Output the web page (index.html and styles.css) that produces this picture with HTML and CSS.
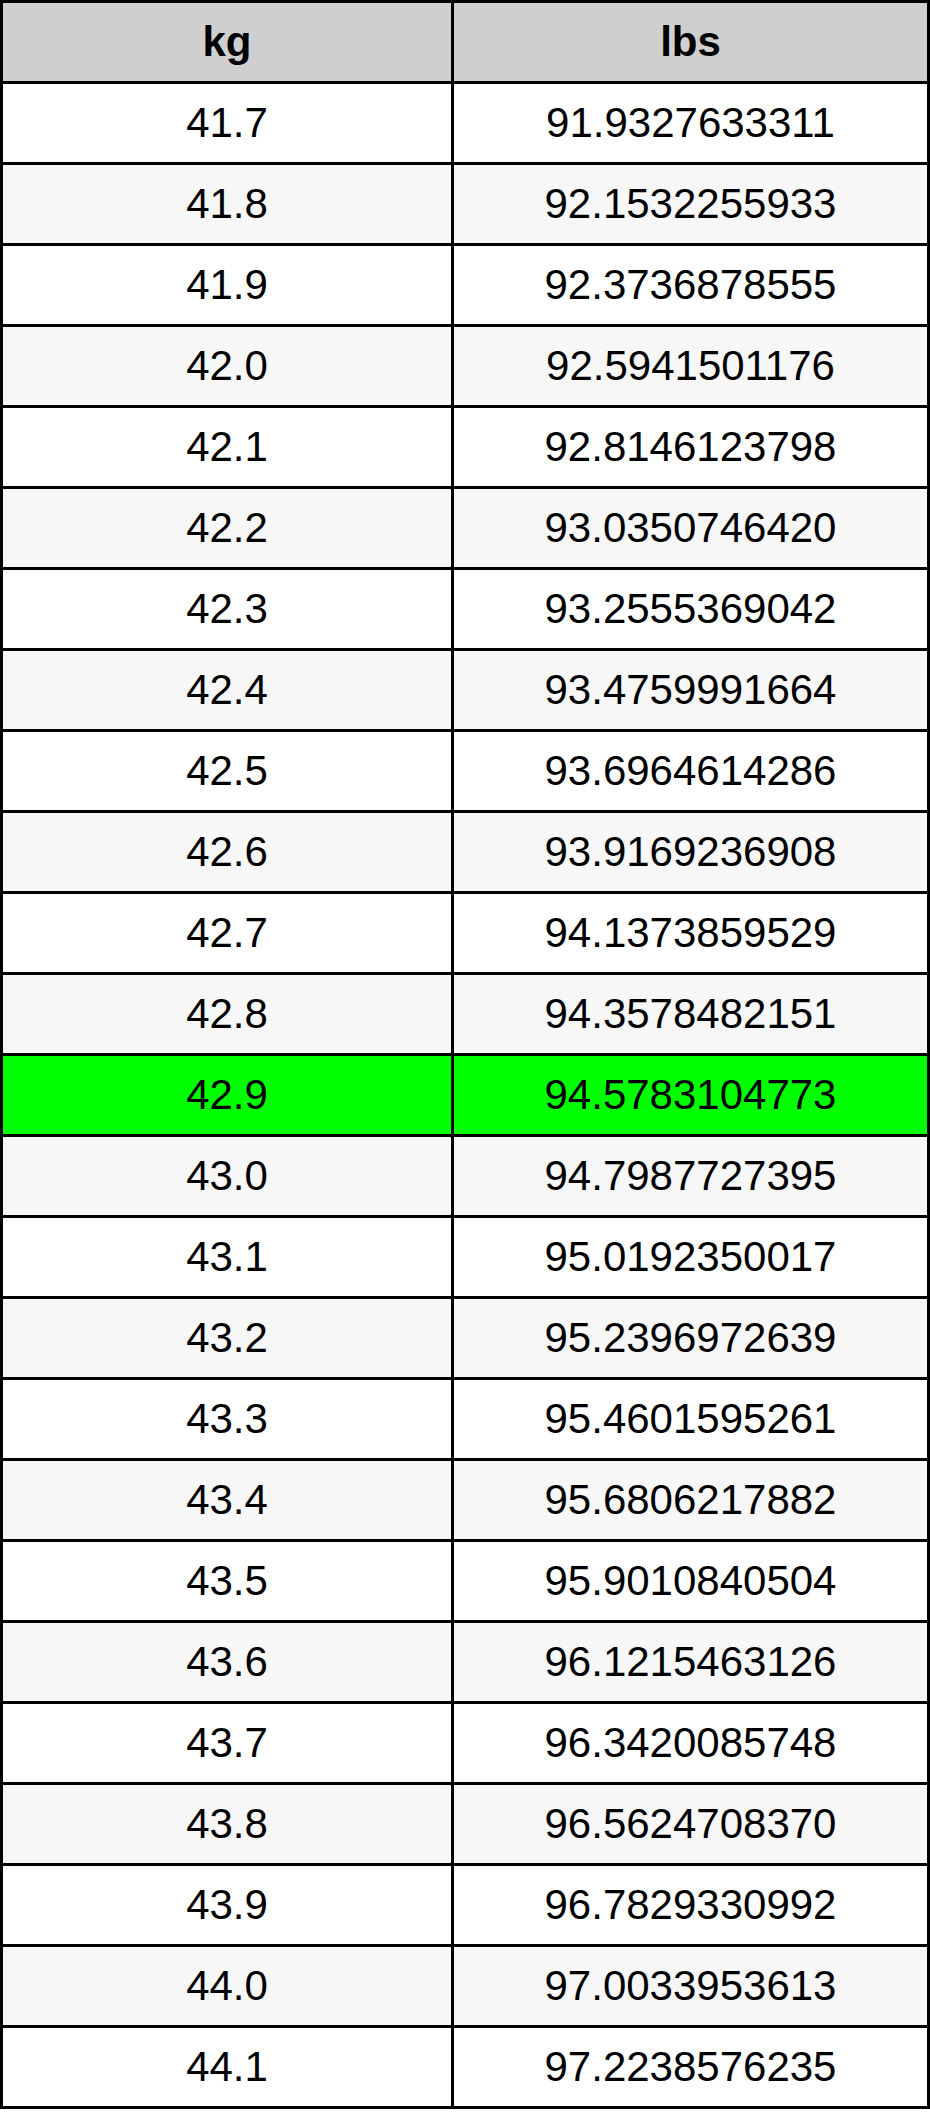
FILE: index.html
```html
<!DOCTYPE html>
<html>
<head>
<meta charset="utf-8">
<link rel="stylesheet" href="styles.css">
</head>
<body>
<table class="conv">
<thead>
<tr><th class="c1">kg</th><th class="c2">lbs</th></tr>
</thead>
<tbody>
<tr><td>41.7</td><td>91.9327633311</td></tr>
<tr><td>41.8</td><td>92.1532255933</td></tr>
<tr><td>41.9</td><td>92.3736878555</td></tr>
<tr><td>42.0</td><td>92.5941501176</td></tr>
<tr><td>42.1</td><td>92.8146123798</td></tr>
<tr><td>42.2</td><td>93.0350746420</td></tr>
<tr><td>42.3</td><td>93.2555369042</td></tr>
<tr><td>42.4</td><td>93.4759991664</td></tr>
<tr><td>42.5</td><td>93.6964614286</td></tr>
<tr><td>42.6</td><td>93.9169236908</td></tr>
<tr><td>42.7</td><td>94.1373859529</td></tr>
<tr><td>42.8</td><td>94.3578482151</td></tr>
<tr class="hl"><td>42.9</td><td>94.5783104773</td></tr>
<tr><td>43.0</td><td>94.7987727395</td></tr>
<tr><td>43.1</td><td>95.0192350017</td></tr>
<tr><td>43.2</td><td>95.2396972639</td></tr>
<tr><td>43.3</td><td>95.4601595261</td></tr>
<tr><td>43.4</td><td>95.6806217882</td></tr>
<tr><td>43.5</td><td>95.9010840504</td></tr>
<tr><td>43.6</td><td>96.1215463126</td></tr>
<tr><td>43.7</td><td>96.3420085748</td></tr>
<tr><td>43.8</td><td>96.5624708370</td></tr>
<tr><td>43.9</td><td>96.7829330992</td></tr>
<tr><td>44.0</td><td>97.0033953613</td></tr>
<tr><td>44.1</td><td>97.2238576235</td></tr>
</tbody>
</table>
</body>
</html>
```
FILE: styles.css
```css
html, body {
  margin: 0;
  padding: 0;
  background: #ffffff;
}

.conv {
  border-collapse: separate;
  border-spacing: 0;
  width: 930px;
  table-layout: fixed;
  border-top: 3px solid #000;
  border-left: 3px solid #000;
  font-family: "Liberation Sans", Arial, sans-serif;
  font-size: 42px;
  color: #000;
}

.conv th,
.conv td {
  box-sizing: content-box;
  height: 78px;
  padding: 0;
  text-align: center;
  vertical-align: middle;
  border-right: 3px solid #000;
  border-bottom: 3px solid #000;
  line-height: 48px;
}

.conv th {
  background: #cfcfcf;
  font-weight: bold;
}

.conv .c1 {
  width: 448px;
}

.conv .c2 {
  width: 473px;
}

.conv tbody tr:nth-child(odd) td {
  background: #ffffff;
}

.conv tbody tr:nth-child(even) td {
  background: #f7f7f7;
}

.conv tbody tr.hl td {
  background: #00ff00;
}
```
